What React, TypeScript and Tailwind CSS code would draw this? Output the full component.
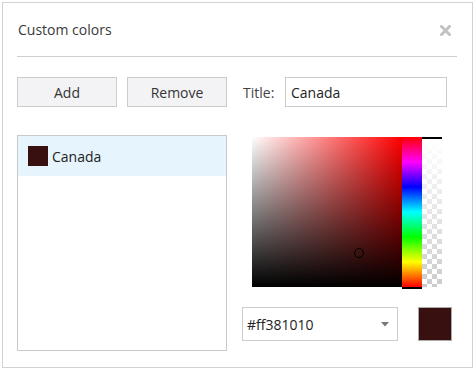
import React from "react";

const font = { fontFamily: '"Open Sans", "Noto Sans", sans-serif' };

export default function App() {
  return (
    <div className="p-[2px] bg-white" style={font}>
      <div className="w-[471px] h-[366px] border border-[#d2d2d2] bg-white pl-[14px] pr-[15px] text-[14px] text-[#333]">
        <div className="h-[54px] flex items-center justify-between border-b border-[#cfcfcf]">
          <span className="leading-[19px] pl-[1px] text-[#3a3a3a]">Custom colors</span>
          <svg width="11" height="11" viewBox="0 0 11 11" className="mr-[6px] mt-[1px]">
            <path d="M1.5 1.5 L9.5 9.5 M9.5 1.5 L1.5 9.5" stroke="#c2c2c2" strokeWidth="3" strokeLinecap="square" />
          </svg>
        </div>
        <div className="flex mt-[20px]">
          <div className="w-[210px] flex gap-[10px]">
            <button className="w-[100px] h-[30px] border border-[#cccccc] bg-[#f3f3f6] text-[#333] text-[14px]">Add</button>
            <button className="w-[100px] h-[30px] border border-[#cccccc] bg-[#f3f3f6] text-[#333] text-[14px]">Remove</button>
          </div>
          <div className="flex items-center ml-[16px]">
            <span className="text-[#444] w-[42px]">Title:</span>
            <div className="w-[162px] h-[30px] border border-[#cccccc] flex items-center px-[5px] text-[#222]">Canada</div>
          </div>
        </div>
        <div className="flex mt-[28px]">
          <div className="w-[210px] h-[216px] border border-[#c9c9c9]">
            <div className="h-[40px] bg-[#e6f5fd] flex items-center pl-[10px]">
              <div className="w-[20px] h-[20px] bg-[#381010]" />
              <span className="ml-[4px] text-[#222]">Canada</span>
            </div>
          </div>
          <div className="ml-[15px] flex flex-col">
            <div className="flex ml-[10px] mt-[2px] h-[152px]">
              <div
                className="relative w-[150px] h-[150px]"
                style={{
                  background:
                    "linear-gradient(to top, #000, rgba(0,0,0,0)), linear-gradient(to right, #fff, rgba(255,255,255,0)), #f00",
                }}
              >
                <div className="absolute w-[10px] h-[10px] rounded-full border border-black left-[102px] top-[111px]" />
              </div>
              <div className="flex flex-col w-[20px]">
                <div
                  className="w-[20px] h-[150px]"
                  style={{
                    background:
                      "linear-gradient(to bottom, #f00 0%, #f0f 16.7%, #00f 33.3%, #0ff 50%, #0f0 66.7%, #ff0 83.3%, #f00 100%)",
                  }}
                />
                <div className="w-[20px] h-[2px] bg-black" />
              </div>
              <div className="flex flex-col w-[20px]">
                <div className="w-[20px] h-[2px] bg-black" />
                <div
                  className="w-[20px] h-[148px]"
                  style={{
                    background:
                      "linear-gradient(to bottom, #fff, rgba(255,255,255,0)), repeating-conic-gradient(#cccccc 0% 25%, #ffffff 0% 50%) 0 0 / 10px 10px",
                  }}
                />
              </div>
            </div>
            <div className="flex mt-[18px] items-start">
              <div className="w-[156px] h-[34px] border border-[#cccccc] flex items-center justify-between pl-[4px] pr-[8px] text-[#222]">
                <span>#ff381010</span>
                <svg width="8" height="5" viewBox="0 0 8 5">
                  <path d="M0 0 L8 0 L4 4.5 Z" fill="#777" />
                </svg>
              </div>
              <div className="ml-[20px] w-[34px] h-[34px] border border-[#aaaaaa] bg-[#381010]" />
            </div>
          </div>
        </div>
      </div>
    </div>
  );
}
